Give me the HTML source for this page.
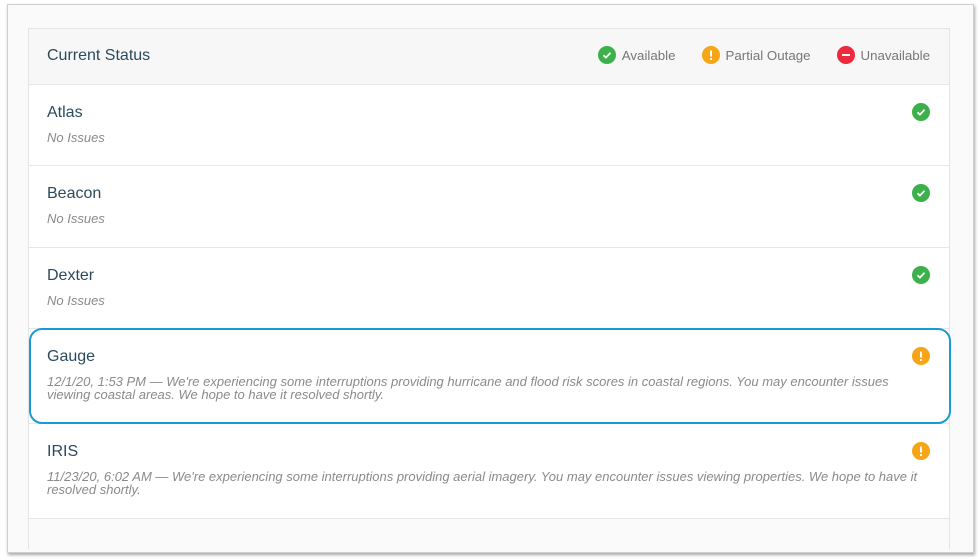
<!DOCTYPE html>
<html><head><style>
body{margin:0;width:980px;height:560px;background:#fff;font-family:"Liberation Sans",sans-serif;position:relative;overflow:hidden}
.frame{position:absolute;left:7px;top:4px;width:965px;height:547px;border:1px solid #cfcfcf;box-shadow:1px 2px 3px rgba(0,0,0,.35);background:#fafafa}
.card{position:absolute;left:28px;top:28px;width:920px;height:520px;border:1px solid #e4e4e4;background:#fff;border-bottom:none}
.hdr{height:55px;background:#f7f7f7;border-bottom:1px solid #e6e6e6;position:relative}
.hdr .t{position:absolute;left:18px;top:18px;font-size:16px;color:#2c4a5e}
.legend{position:absolute;right:19px;top:17px;font-size:13.3px;color:#777;display:flex;align-items:center}
.legend span{display:flex;align-items:center;margin-left:26px}
.ic{width:18px;height:18px;border-radius:50%;display:inline-block;position:relative;margin-right:6px;flex:none}
.g{background:#3cb04a}.o{background:#f5a516}.r{background:#ee2a3c}
.row{position:relative;border-bottom:1px solid #e6e6e6;padding:0 18px}
.row .n{position:absolute;left:18px;top:19px;font-size:16px;color:#2c4a5e}
.row .d{position:absolute;left:18px;top:46px;font-size:13px;font-style:italic;color:#8a8a8a;right:20px;line-height:13px}
.row .ic{position:absolute;top:18px;margin:0}
.foot{height:30px;background:#fafafa}
.hl{position:absolute;left:29px;top:328px;width:918px;height:92px;border:2px solid #1a9ad6;border-radius:13px}
svg{position:absolute;left:0;top:0}
</style></head><body>
<div class="frame"></div>
<div class="card">
<div class="hdr"><div class="t">Current Status</div>
<div class="legend">
<span><i class="ic g"><svg width="18" height="18"><path d="M5.5 9.3l2.4 2.3 4.6-4.8" stroke="#fff" stroke-width="1.8" fill="none"/></svg></i>Available</span>
<span><i class="ic o"><svg width="18" height="18"><path d="M9 4.5v6" stroke="#fff" stroke-width="2"/><circle cx="9" cy="13" r="1.1" fill="#fff"/></svg></i>Partial Outage</span>
<span><i class="ic r"><svg width="18" height="18"><path d="M5 9h8" stroke="#fff" stroke-width="2"/></svg></i>Unavailable</span>
</div></div>
<div class="row" style="height:80px"><div class="n">Atlas</div><div class="d">No Issues</div><i class="ic g" style="right:19px"><svg width="18" height="18"><path d="M5.5 9.3l2.4 2.3 4.6-4.8" stroke="#fff" stroke-width="1.8" fill="none"/></svg></i></div>
<div class="row" style="height:81px"><div class="n">Beacon</div><div class="d">No Issues</div><i class="ic g" style="right:19px"><svg width="18" height="18"><path d="M5.5 9.3l2.4 2.3 4.6-4.8" stroke="#fff" stroke-width="1.8" fill="none"/></svg></i></div>
<div class="row" style="height:80px"><div class="n">Dexter</div><div class="d">No Issues</div><i class="ic g" style="right:19px"><svg width="18" height="18"><path d="M5.5 9.3l2.4 2.3 4.6-4.8" stroke="#fff" stroke-width="1.8" fill="none"/></svg></i></div>
<div class="row" style="height:94px"><div class="n">Gauge</div><div class="d">12/1/20, 1:53 PM — We're experiencing some interruptions providing hurricane and flood risk scores in coastal regions. You may encounter issues viewing coastal areas. We hope to have it resolved shortly.</div><i class="ic o" style="right:19px"><svg width="18" height="18"><path d="M9 4.5v6" stroke="#fff" stroke-width="2"/><circle cx="9" cy="13" r="1.1" fill="#fff"/></svg></i></div>
<div class="row" style="height:94px"><div class="n">IRIS</div><div class="d">11/23/20, 6:02 AM — We're experiencing some interruptions providing aerial imagery. You may encounter issues viewing properties. We hope to have it resolved shortly.</div><i class="ic o" style="right:19px"><svg width="18" height="18"><path d="M9 4.5v6" stroke="#fff" stroke-width="2"/><circle cx="9" cy="13" r="1.1" fill="#fff"/></svg></i></div>
<div class="foot"></div>
</div>
<div class="hl"></div>
</body></html>
